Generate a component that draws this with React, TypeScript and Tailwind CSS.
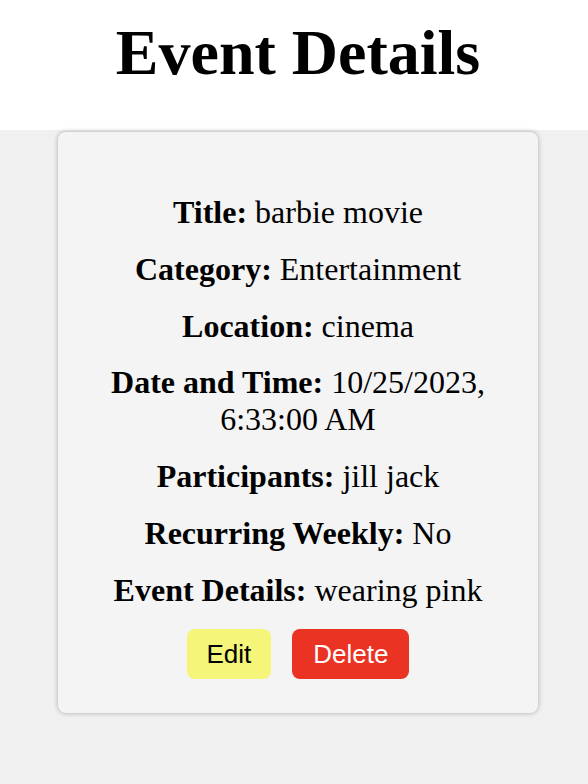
export default function App() {
  const rows: [string, string][] = [
    ["Title:", "barbie movie"],
    ["Category:", "Entertainment"],
    ["Location:", "cinema"],
    ["Date and Time:", "10/25/2023, 6:33:00 AM"],
    ["Participants:", "jill jack"],
    ["Recurring Weekly:", "No"],
    ["Event Details:", "wearing pink"],
  ];
  return (
    <div className="min-h-[784px] bg-[#f0f0f0] text-black pl-[8px]" style={{ fontFamily: '"Liberation Serif", "Times New Roman", serif' }}>
      <div className="h-[130px] bg-white flex items-center justify-center -ml-[8px] pl-[8px]">
        <h1 className="text-[64px] font-bold leading-[1.15] mt-[-25px]">Event Details</h1>
      </div>
      <div className="mx-auto mt-[2px] w-[480px] rounded-lg bg-[#f4f4f4] shadow-[0_0_5px_rgba(0,0,0,0.3)] pt-[62px] pb-[34px] px-[20px] flex flex-col items-center">
        <div className="flex flex-col gap-[20px] text-[32px] leading-[1.15] text-center w-full">
          {rows.map(([k, v]) => (
            <p key={k} className="px-[30px]">
              <strong className="font-bold">{k}</strong> {v}
            </p>
          ))}
        </div>
        <div className="mt-[21px] flex gap-[21px]" style={{ fontFamily: '"Liberation Sans", Arial, sans-serif' }}>
          <button className="h-[50px] px-[20px] rounded-lg bg-[#f5f57a] text-[26px] text-black">Edit</button>
          <button className="h-[50px] px-[21px] rounded-lg bg-[#ea3323] text-[26px] text-white">Delete</button>
        </div>
      </div>
    </div>
  );
}
